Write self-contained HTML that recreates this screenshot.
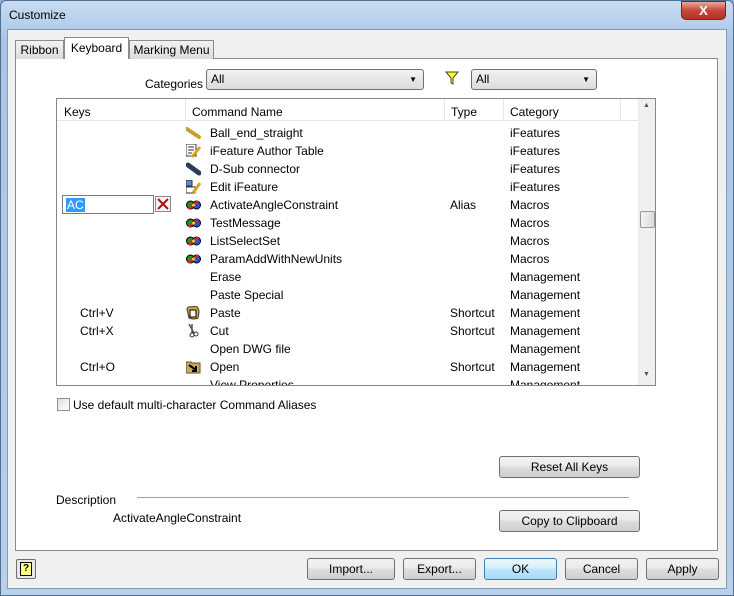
<!DOCTYPE html>
<html><head><style>
*{box-sizing:border-box;margin:0;padding:0}
body{width:734px;height:596px;overflow:hidden;font-family:"Liberation Sans",sans-serif;font-size:12px;color:#000;background:#8fb0d4;position:relative}
.a{position:absolute}
.frame{left:0;top:0;width:734px;height:596px;background:linear-gradient(#c9dcf0,#a9c6e6 40px,#b8d0ea);border:1px solid #4f6f94;border-radius:6px 6px 0 0}
.client{left:7px;top:29px;width:720px;height:560px;background:#f0f0f0;border:1px solid #7f9db9}
.btn{position:absolute;height:22px;border:1px solid #707070;border-radius:3px;background:linear-gradient(#f2f2f2 0,#ebebeb 45%,#dddddd 50%,#cfcfcf 100%);text-align:center;line-height:20px}
.row{position:absolute;left:0;height:18px;line-height:18px;width:580px}
.ic{position:absolute;left:129px;top:2px;width:15px;height:14px}
</style></head><body>
<div class="a frame"></div>
<div class="a" style="left:9px;top:8px;font-size:12px">Customize</div>
<div class="a" style="left:681px;top:1px;width:45px;height:19px;border:1px solid #6b2a22;border-radius:0 0 5px 5px;background:linear-gradient(#e9a99b,#c7473a 50%,#b8301f);color:#fff;font-weight:bold;text-align:center;line-height:17px;font-size:13px">X</div>
<div class="a client"></div>
<div class="a" style="left:15px;top:58px;width:703px;height:493px;background:#fff;border:1px solid #898c95"></div>
<div class="a" style="left:15px;top:40px;width:49px;height:19px;border:1px solid #898c95;border-bottom:none;background:linear-gradient(#f2f2f2,#dcdcdc);text-align:center;line-height:18px">Ribbon</div>
<div class="a" style="left:64px;top:37px;width:65px;height:22px;border:1px solid #898c95;border-bottom:none;background:#fff;text-align:center;line-height:20px">Keyboard</div>
<div class="a" style="left:129px;top:40px;width:85px;height:19px;border:1px solid #898c95;border-bottom:none;background:linear-gradient(#f2f2f2,#dcdcdc);text-align:center;line-height:18px">Marking Menu</div>
<div class="a" style="left:145px;top:77px">Categories</div>
<div class="a" style="left:206px;top:69px;width:218px;height:21px;border:1px solid #707070;border-radius:3px;background:linear-gradient(#f2f2f2,#dcdcdc);padding-left:4px;line-height:19px">All<span class="a" style="right:6px;top:0;font-size:8px">&#9660;</span></div>
<svg class="a" style="left:445px;top:71px" width="14" height="14"><path d="M1 1H13L8 7V13L6 12V7Z" fill="#ffff00" stroke="#444" stroke-width="1"/></svg>
<div class="a" style="left:471px;top:69px;width:126px;height:21px;border:1px solid #707070;border-radius:3px;background:linear-gradient(#f2f2f2,#dcdcdc);padding-left:4px;line-height:19px">All<span class="a" style="right:6px;top:0;font-size:8px">&#9660;</span></div>
<div class="a" style="left:56px;top:98px;width:600px;height:288px;border:1px solid #828790;background:#fff;overflow:hidden">
 <div class="a" style="left:0;top:0;width:581px;height:22px;border-bottom:1px solid #e5e5e5;background:#fff">
  <div class="a" style="left:7px;top:6px">Keys</div>
  <div class="a" style="left:128px;top:0;height:22px;border-left:1px solid #e5e5e5"></div>
  <div class="a" style="left:135px;top:6px">Command Name</div>
  <div class="a" style="left:387px;top:0;height:22px;border-left:1px solid #e5e5e5"></div>
  <div class="a" style="left:394px;top:6px">Type</div>
  <div class="a" style="left:446px;top:0;height:22px;border-left:1px solid #e5e5e5"></div>
  <div class="a" style="left:453px;top:6px">Category</div>
  <div class="a" style="left:563px;top:0;height:22px;border-left:1px solid #e5e5e5"></div>
 </div>
 <div class="a" style="left:581px;top:0;width:18px;height:287px;background:#f0f0f0;border-left:1px solid #e8e8e8">
  <div class="a" style="left:4px;top:3px;font-size:7px;color:#555">&#9650;</div>
  <div class="a" style="left:1px;top:112px;width:15px;height:17px;border:1px solid #999;border-radius:2px;background:linear-gradient(90deg,#f3f3f3,#dcdcdc)"></div>
  <div class="a" style="left:4px;top:272px;font-size:7px;color:#555">&#9660;</div>
 </div>
 <div class="a" style="left:0;top:25px;width:581px">
  <div class="row" style="top:0"><svg class="ic" viewBox="0 0 15 14"><path d="M1 3L13 11" stroke="#c8a030" stroke-width="4" stroke-linecap="round"/></svg><span class="a" style="left:153px">Ball_end_straight</span><span class="a" style="left:453px">iFeatures</span></div>
  <div class="row" style="top:18px"><svg class="ic" viewBox="0 0 15 14"><rect x="0" y="0" width="10" height="12" fill="#fff" stroke="#333"/><path d="M2 3H8M2 6H8M2 9H6" stroke="#333"/><path d="M6 13L14 3" stroke="#e0a020" stroke-width="3"/></svg><span class="a" style="left:153px">iFeature Author Table</span><span class="a" style="left:453px">iFeatures</span></div>
  <div class="row" style="top:36px"><svg class="ic" viewBox="0 0 15 14"><path d="M2 3L13 11" stroke="#2a3d5a" stroke-width="5" stroke-linecap="round"/></svg><span class="a" style="left:153px">D-Sub connector</span><span class="a" style="left:453px">iFeatures</span></div>
  <div class="row" style="top:54px"><svg class="ic" viewBox="0 0 15 14"><rect x="0" y="0" width="6" height="6" fill="#5a8ad0" stroke="#333"/><rect x="0" y="7" width="9" height="6" fill="#fff" stroke="#333"/><path d="M7 13L14 3" stroke="#e0a020" stroke-width="3"/></svg><span class="a" style="left:153px">Edit iFeature</span><span class="a" style="left:453px">iFeatures</span></div>
  <div class="row" style="top:72px"><svg class="ic" viewBox="0 0 15 14"><circle cx="4.5" cy="7" r="4" fill="#2a8a2a" stroke="#000"/><circle cx="10.5" cy="7" r="4" fill="#3050d0" stroke="#000"/><path d="M3 11L12 3" stroke="#e02020" stroke-width="2.5"/><circle cx="7.5" cy="7" r="1.5" fill="#ffd000"/></svg><span class="a" style="left:153px">ActivateAngleConstraint</span><span class="a" style="left:393px">Alias</span><span class="a" style="left:453px">Macros</span></div>
  <div class="row" style="top:90px"><svg class="ic" viewBox="0 0 15 14"><circle cx="4.5" cy="7" r="4" fill="#2a8a2a" stroke="#000"/><circle cx="10.5" cy="7" r="4" fill="#3050d0" stroke="#000"/><path d="M3 11L12 3" stroke="#e02020" stroke-width="2.5"/><circle cx="7.5" cy="7" r="1.5" fill="#ffd000"/></svg><span class="a" style="left:153px">TestMessage</span><span class="a" style="left:453px">Macros</span></div>
  <div class="row" style="top:108px"><svg class="ic" viewBox="0 0 15 14"><circle cx="4.5" cy="7" r="4" fill="#2a8a2a" stroke="#000"/><circle cx="10.5" cy="7" r="4" fill="#3050d0" stroke="#000"/><path d="M3 11L12 3" stroke="#e02020" stroke-width="2.5"/><circle cx="7.5" cy="7" r="1.5" fill="#ffd000"/></svg><span class="a" style="left:153px">ListSelectSet</span><span class="a" style="left:453px">Macros</span></div>
  <div class="row" style="top:126px"><svg class="ic" viewBox="0 0 15 14"><circle cx="4.5" cy="7" r="4" fill="#2a8a2a" stroke="#000"/><circle cx="10.5" cy="7" r="4" fill="#3050d0" stroke="#000"/><path d="M3 11L12 3" stroke="#e02020" stroke-width="2.5"/><circle cx="7.5" cy="7" r="1.5" fill="#ffd000"/></svg><span class="a" style="left:153px">ParamAddWithNewUnits</span><span class="a" style="left:453px">Macros</span></div>
  <div class="row" style="top:144px"><span class="a" style="left:153px">Erase</span><span class="a" style="left:453px">Management</span></div>
  <div class="row" style="top:162px"><span class="a" style="left:153px">Paste Special</span><span class="a" style="left:453px">Management</span></div>
  <div class="row" style="top:180px"><span class="a" style="left:23px">Ctrl+V</span><svg class="ic" viewBox="0 0 15 14"><path d="M1 3Q2 0 6 1L10 0Q13 2 13 6L12 12Q8 14 3 12Z" fill="#d9b030" stroke="#333"/><rect x="4" y="4" width="6" height="7" fill="#fff" stroke="#000"/></svg><span class="a" style="left:153px">Paste</span><span class="a" style="left:393px">Shortcut</span><span class="a" style="left:453px">Management</span></div>
  <div class="row" style="top:198px"><span class="a" style="left:23px">Ctrl+X</span><svg class="ic" viewBox="0 0 15 14"><path d="M3 0L8 9M6 0L6 9" stroke="#555" stroke-width="1.5"/><circle cx="6" cy="11" r="2" fill="none" stroke="#333"/><circle cx="10" cy="10" r="2" fill="none" stroke="#333"/></svg><span class="a" style="left:153px">Cut</span><span class="a" style="left:393px">Shortcut</span><span class="a" style="left:453px">Management</span></div>
  <div class="row" style="top:216px"><span class="a" style="left:153px">Open DWG file</span><span class="a" style="left:453px">Management</span></div>
  <div class="row" style="top:234px"><span class="a" style="left:23px">Ctrl+O</span><svg class="ic" viewBox="0 0 15 14"><path d="M0 2H5L6 3H14V13H0Z" fill="#c9a860" stroke="#6a5020"/><path d="M3 5L10 10M10 6V11H6" stroke="#000" stroke-width="2" fill="none"/></svg><span class="a" style="left:153px">Open</span><span class="a" style="left:393px">Shortcut</span><span class="a" style="left:453px">Management</span></div>
  <div class="row" style="top:252px"><span class="a" style="left:153px">View Properties</span><span class="a" style="left:453px">Management</span></div>
 </div>
 <div class="a" style="left:5px;top:96px;width:92px;height:19px;border:1px solid #7a7a7a;background:#fff"><span class="a" style="left:3px;top:2px;background:#3399ff;color:#fff;padding:0 1px">AC</span></div>
 <svg class="a" style="left:98px;top:97px" width="16" height="16"><rect x="0.5" y="0.5" width="15" height="15" fill="#f4f4f4" stroke="#888"/><path d="M3 3L13 13M13 3L3 13" stroke="#b01010" stroke-width="2"/></svg>
</div>
<div class="a" style="left:57px;top:398px;width:13px;height:13px;border:1px solid #8f8f8f;background:linear-gradient(135deg,#e0e0e0,#fff)"></div>
<div class="a" style="left:73px;top:398px">Use default multi-character Command Aliases</div>
<div class="btn" style="left:499px;top:456px;width:141px">Reset All Keys</div>
<div class="a" style="left:56px;top:493px">Description</div>
<div class="a" style="left:137px;top:497px;width:492px;border-top:1px solid #a0a0a0"></div>
<div class="a" style="left:113px;top:511px">ActivateAngleConstraint</div>
<div class="btn" style="left:499px;top:510px;width:141px">Copy to Clipboard</div>
<div class="a" style="left:16px;top:559px;width:20px;height:20px;border:1px solid #707070;border-radius:2px;background:#e8e8e8"><div class="a" style="left:3px;top:2px;width:12px;height:14px;background:#ffff80;border:1px solid #000;font-size:10px;font-weight:bold;text-align:center;line-height:12px">?</div></div>
<div class="btn" style="left:307px;top:558px;width:88px">Import...</div>
<div class="btn" style="left:403px;top:558px;width:73px">Export...</div>
<div class="btn" style="left:484px;top:558px;width:73px;border-color:#3c7fb1;background:linear-gradient(#eaf6fd,#d9f0fc 45%,#bee6fd 50%,#a7d9f5)">OK</div>
<div class="btn" style="left:565px;top:558px;width:73px">Cancel</div>
<div class="btn" style="left:646px;top:558px;width:73px">Apply</div>
</body></html>
